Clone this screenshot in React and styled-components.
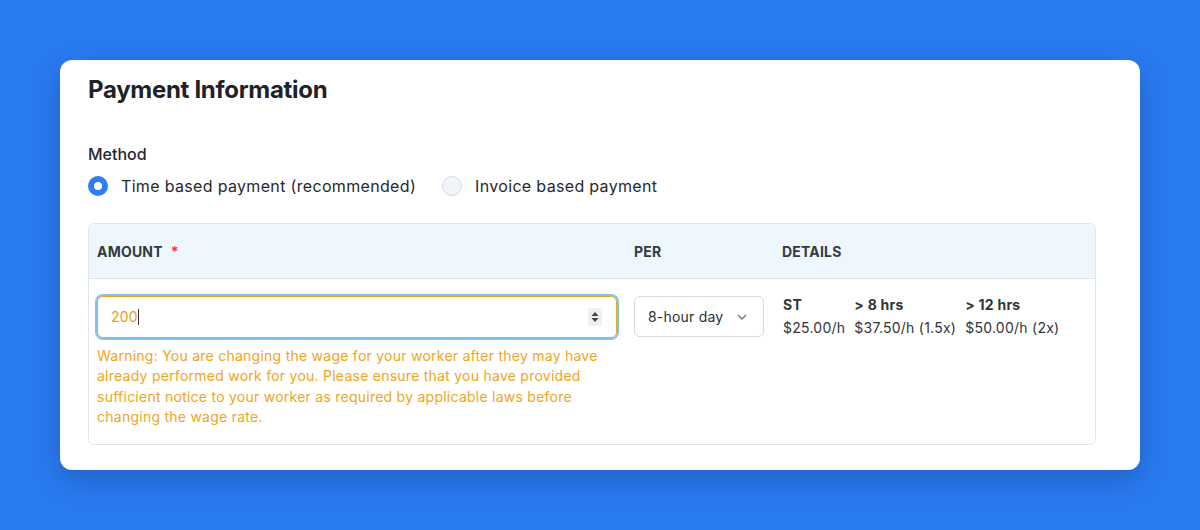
import styled, { createGlobalStyle } from 'styled-components';

const Global = createGlobalStyle`
  html, body { margin: 0; padding: 0; }
  body {
    background: #2a7bf1;
    font-family: Inter, "Noto Sans", "Liberation Sans", sans-serif;
    color: #1f2328;
  }
`;

const Page = styled.div`
  width: 1200px;
  height: 530px;
  padding: 60px;
  box-sizing: border-box;
  background: #2a7bf1;
`;

const Card = styled.section`
  background: #fff;
  border-radius: 12px;
  box-shadow: 0 10px 30px rgba(20, 50, 120, 0.35);
  padding: 14px 44px 26px 28px;
  height: 410px;
  box-sizing: border-box;
`;

const Title = styled.h1`
  margin: 0;
  font-size: 24px;
  font-weight: 700;
  letter-spacing: -0.3px;
  line-height: 32px;
  color: #1f2226;
`;

const Label = styled.div`
  margin-top: 37px;
  font-size: 16px;
  font-weight: 500;
  line-height: 22px;
  color: #24272c;
`;

const Radios = styled.div`
  display: flex;
  gap: 26px;
  margin-top: 10px;
`;

const RadioItem = styled.label`
  display: flex;
  align-items: center;
  gap: 13px;
  font-size: 16px;
  line-height: 22px;
  letter-spacing: 0.33px;
  color: #26292e;
`;

const Dot = styled.span`
  width: 20px;
  height: 20px;
  box-sizing: border-box;
  border-radius: 50%;
  background: ${({ checked }) => (checked ? '#fff' : '#f1f5fb')};
  border: ${({ checked }) => (checked ? '6px solid #2f7cf6' : '1px solid #d5dbe3')};
`;

const Table = styled.div`
  margin-top: 26px;
  border: 1px solid #e0e5ec;
  border-radius: 6px;
  overflow: hidden;
`;

const Row = styled.div`
  display: grid;
  grid-template-columns: 537px 146px 1fr;
  align-items: ${({ head }) => (head ? 'center' : 'start')};
  background: ${({ head }) => (head ? '#eef6fe' : '#fff')};
  border-bottom: ${({ head }) => (head ? '1px solid #e0e5ec' : 'none')};
  height: ${({ head }) => (head ? '54px' : 'auto')};
  padding: ${({ head }) => (head ? '0' : '16px 0 16px')};
`;

const Th = styled.div`
  padding: 0 9px 0 ${({ pl }) => pl || 8}px;
  font-size: 14px;
  font-weight: 700;
  color: #343a42;
  letter-spacing: 0.2px;
`;

const Star = styled.span`
  color: #ee3b3b;
  margin-left: 8px;
`;

const Cell = styled.div`
  padding: 0 9px 0 ${({ pl }) => pl || 8}px;
`;

const InputBox = styled.div`
  display: flex;
  align-items: center;
  justify-content: space-between;
  height: 42px;
  box-sizing: border-box;
  border: 1px solid #efa51e;
  border-radius: 6px;
  box-shadow: 0 0 0 2px #7cc4f6;
  padding: 0 14px 0 13px;
  margin-top: 1px;
`;

const InputText = styled.span`
  font-size: 14px;
  color: #eb9c18;
  line-height: 20px;
  letter-spacing: 0.2px;
  &::after {
    content: '';
    display: inline-block;
    width: 1px;
    height: 16px;
    background: #333;
    vertical-align: -3px;
  }
`;

const Spin = styled.span`
  width: 14px;
  height: 18px;
  background: #f0f0f0;
  border-radius: 2px;
  display: flex;
  align-items: center;
  justify-content: center;
`;

const Warning = styled.p`
  margin: 8px 0 0;
  font-size: 14px;
  line-height: 20.4px;
  letter-spacing: 0.25px;
  color: #f0a41e;
  max-width: 510px;
`;

const Select = styled.div`
  display: flex;
  align-items: center;
  justify-content: space-between;
  width: 130px;
  height: 41px;
  box-sizing: border-box;
  border: 1px solid #d6dbe2;
  border-radius: 6px;
  padding: 0 16px 0 13px;
  font-size: 14px;
  letter-spacing: 0.2px;
  color: #2b2f35;
  margin-top: 1px;
`;

const Details = styled.div`
  display: flex;
  gap: 9px;
  padding-left: 11px;
`;

const Rate = styled.div`
  display: flex;
  flex-direction: column;
  gap: 3px;
  font-size: 14px;
  line-height: 20px;
  letter-spacing: 0.25px;
  color: #30353b;
  b { font-weight: 700; }
`;

const rates = [
  { label: 'ST', value: '$25.00/h' },
  { label: '> 8 hrs', value: '$37.50/h (1.5x)' },
  { label: '> 12 hrs', value: '$50.00/h (2x)' },
];

export default function App() {
  return (
    <Page>
      <Global />
      <Card>
        <Title>Payment Information</Title>
        <Label>Method</Label>
        <Radios>
          <RadioItem><Dot checked />Time based payment (recommended)</RadioItem>
          <RadioItem><Dot />Invoice based payment</RadioItem>
        </Radios>
        <Table>
          <Row head>
            <Th>AMOUNT<Star>*</Star></Th>
            <Th>PER</Th>
            <Th pl={10}>DETAILS</Th>
          </Row>
          <Row>
            <Cell>
              <InputBox>
                <InputText>200</InputText>
                <Spin>
                  <svg width="8" height="12" viewBox="0 0 8 12">
                    <path d="M4 1 L7.5 5 H0.5 Z" fill="#444" />
                    <path d="M4 11 L7.5 7 H0.5 Z" fill="#444" />
                  </svg>
                </Spin>
              </InputBox>
              <Warning>
                Warning: You are changing the wage for your worker after they may have already performed work for you. Please ensure that you have provided sufficient notice to your worker as required by applicable laws before changing the wage rate.
              </Warning>
            </Cell>
            <Cell>
              <Select>
                8-hour day
                <svg width="10" height="6" viewBox="0 0 10 6">
                  <path d="M1 1 L5 5 L9 1" fill="none" stroke="#6b7280" strokeWidth="1.3" />
                </svg>
              </Select>
            </Cell>
            <Details>
              {rates.map((r) => (
                <Rate key={r.label}>
                  <b>{r.label}</b>
                  <span>{r.value}</span>
                </Rate>
              ))}
            </Details>
          </Row>
        </Table>
      </Card>
    </Page>
  );
}
